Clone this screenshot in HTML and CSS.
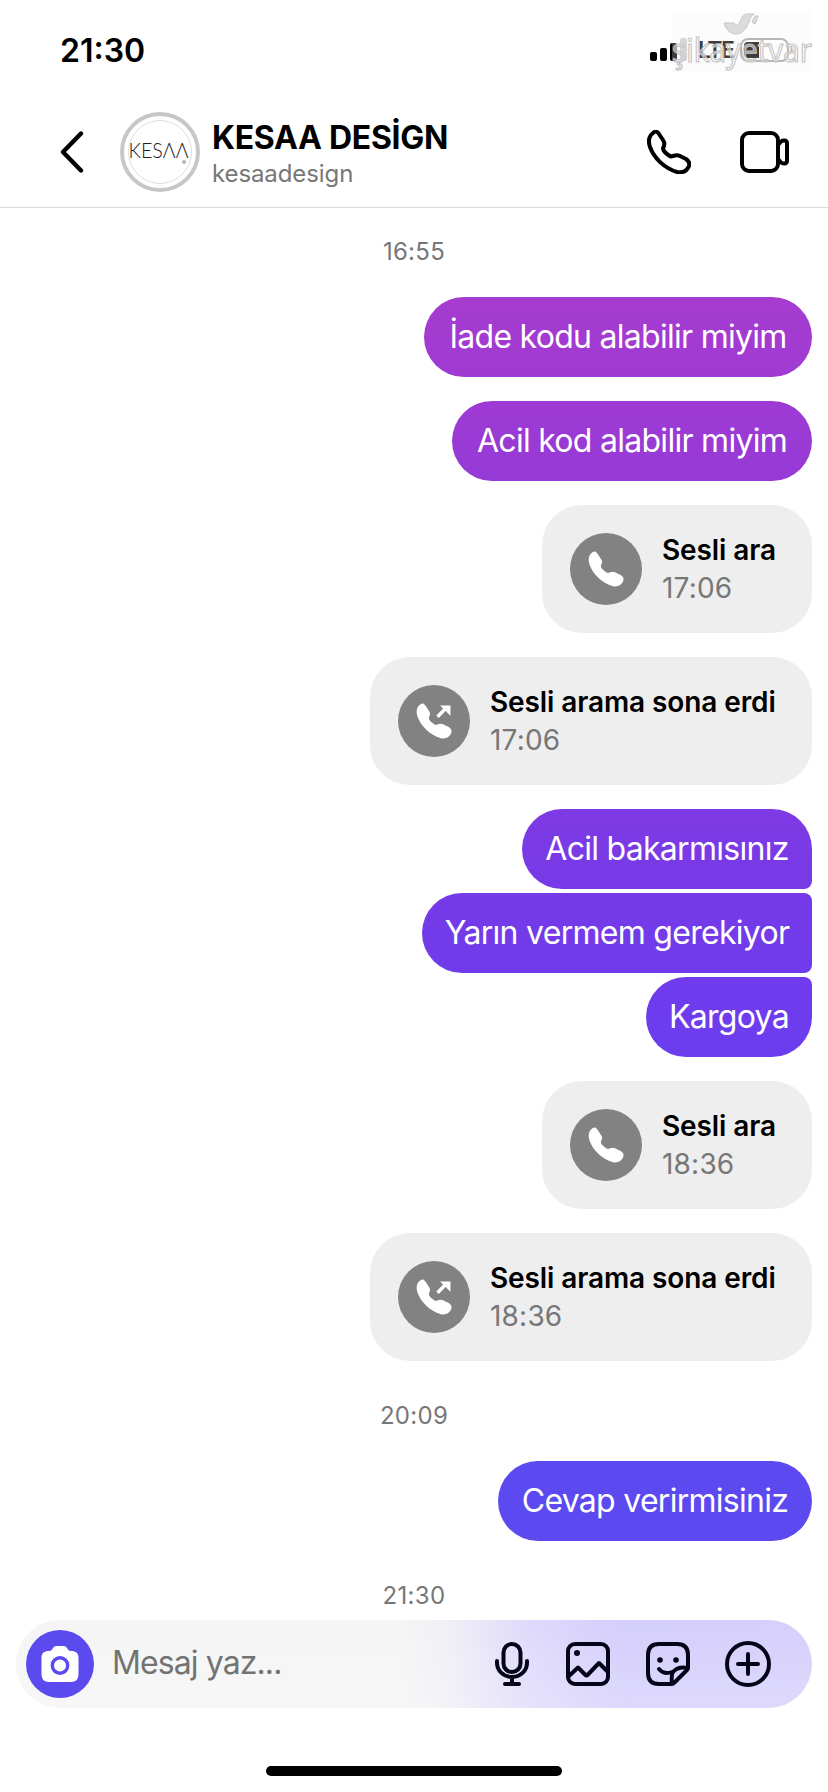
FILE: index.html
```html
<!DOCTYPE html>
<html lang="tr">
<head>
<meta charset="utf-8">
<title>KESAA DESİGN</title>
<link rel="stylesheet" href="styles.css">
</head>
<body>
<svg class="defs" width="0" height="0">
  <symbol id="handset" viewBox="0 0 44 44">
    <path d="M6 3 C2 6 1 11 3 17 C7 28 17 38 30 42 C36 43 40 41 42 36 C43 33 42 31 39 29 L33 26 C31 25 29 25 26 26 C24 27 22 26 20 24 C17 22 16 20 16 18 C18 15 18 13 16 10 L12 4 C10 1 8 1 6 3Z"/>
  </symbol>
</svg>
<div class="phone">
  <div class="status">
    <span class="clock">21:30</span>
    <div class="indicators">
      <svg class="signal" width="38" height="24" viewBox="0 0 38 24"><rect x="0" y="14" width="7" height="9" rx="2"/><rect x="10" y="10" width="7" height="13" rx="2"/><rect x="20" y="5" width="7" height="18" rx="2"/><rect x="30" y="0" width="7" height="23" rx="2" fill="#ccc"/></svg>
      <span class="network">LTE</span>
      <svg width="54" height="24" viewBox="0 0 54 24"><rect x="1" y="1" width="47" height="22" rx="7" fill="none" stroke="#a3a3a3" stroke-width="2"/><path d="M8 4h11v16H8a4 4 0 0 1-4-4V8a4 4 0 0 1 4-4Z"/><path d="M50.500 8c3 2 3 6 0 8Z" fill="#aaa"/></svg>
    </div>
    <svg class="watermark" width="160" height="64" viewBox="0 0 160 64">
      <rect x="4" y="0" width="140" height="60" fill="#f4f4f4" opacity=".25"/>
      <path d="M56 11 H66 C68 14 70 14 72 10 C74 4 76 2 80 2 H86 C82 4 82 8 80 12 C77 19 73 22 67 22 C61 21 58 17 56 11Z M84 10 L87 4 H90 L87 12Z" fill="#dcdcdc" stroke="#c6c6c6" stroke-width="1"/>
      <text x="4" y="50" textLength="140" lengthAdjust="spacingAndGlyphs">şikayetvar</text>
    </svg>
  </div>

  <header class="header">
    <svg class="back" width="24" height="42" viewBox="0 0 24 42"><path d="M21 2.500 3 21 21 39.500" fill="none" stroke="#000" stroke-width="4.400" stroke-linecap="round" stroke-linejoin="round"/></svg>
    <svg class="avatar" width="80" height="80" viewBox="0 0 80 80">
      <circle cx="40" cy="40" r="38" fill="#fff" stroke="#c7c7c7" stroke-width="4"/>
      <circle cx="40" cy="40" r="31.500" fill="none" stroke="#dedede" stroke-width="1"/>
      <text x="8.500" y="46" textLength="60" lengthAdjust="spacingAndGlyphs">KESΛΛ</text>
      <circle cx="64" cy="50" r="2" fill="#b5b5b5"/>
    </svg>
    <div class="who">
      <h1>KESAA DESİGN</h1>
      <p>kesaadesign</p>
    </div>
    <div class="calls">
      <svg width="46" height="46" viewBox="-1 -1 46 46" class="line"><use href="#handset" width="44" height="44"/></svg>
      <svg width="50" height="42" viewBox="0 0 50 42" class="line"><rect x="2" y="2" width="36" height="38" rx="7"/><path d="M38 14 L41 10.500 C43 9 47 9 47 12 V30 C47 33 43 33 41 31.500 L38 28"/></svg>
    </div>
  </header>

  <main class="thread">
    <time class="stamp first">16:55</time>
    <div class="bubble w388">İade kodu alabilir miyim</div>
    <div class="bubble b2 w360">Acil kod alabilir miyim</div>
    <div class="card short">
      <span class="disc"><svg width="38" height="38" viewBox="0 0 44 44"><use href="#handset" width="44" height="44"/></svg></span>
      <div><b>Sesli ara</b><span class="at">17:06</span></div>
    </div>
    <div class="card long">
      <span class="disc"><svg width="38" height="38" viewBox="0 0 44 44"><use href="#handset" width="44" height="44"/><path class="arrow" d="M26 17 36 7"/><path d="M29 4h12v12Z"/></svg></span>
      <div><b>Sesli arama sona erdi</b><span class="at">17:06</span></div>
    </div>
    <div class="group">
      <div class="bubble b3 w290 top">Acil bakarmısınız</div>
      <div class="bubble b4 w390 mid">Yarın vermem gerekiyor</div>
      <div class="bubble b5 w166 end">Kargoya</div>
    </div>
    <div class="card short">
      <span class="disc"><svg width="38" height="38" viewBox="0 0 44 44"><use href="#handset" width="44" height="44"/></svg></span>
      <div><b>Sesli ara</b><span class="at">18:36</span></div>
    </div>
    <div class="card long">
      <span class="disc"><svg width="38" height="38" viewBox="0 0 44 44"><use href="#handset" width="44" height="44"/><path class="arrow" d="M26 17 36 7"/><path d="M29 4h12v12Z"/></svg></span>
      <div><b>Sesli arama sona erdi</b><span class="at">18:36</span></div>
    </div>
    <time class="stamp">20:09</time>
    <div class="bubble b6 w314">Cevap verirmisiniz</div>
    <time class="stamp last">21:30</time>
  </main>

  <footer class="composer">
    <span class="camera"><svg width="38" height="36" viewBox="0 0 38 36"><path d="M8 5 C10 5 11 4 12 2 C13 .5 14 0 16 0 H22 C24 0 25 .5 26 2 C27 4 28 5 30 5 C35 5 37.500 7 37.500 12 V28 C37.500 33 35 36 30 36 H8 C3 36 .5 33 .5 28 V12 C.5 7 3 5 8 5Z" fill="#fff"/><circle cx="19" cy="19.500" r="7.700" fill="#fff" stroke="#5b4bef" stroke-width="3.400"/></svg></span>
    <span class="placeholder">Mesaj yaz...</span>
    <div class="tools">
      <svg class="mic" width="46" height="48" viewBox="0 0 46 48"><rect x="13.500" y="4" width="17" height="28" rx="8.500"/><path d="M7 21v2a15 14 0 0 0 30 0v-2M22 37v6M15 44h14"/></svg>
      <svg width="48" height="48" viewBox="0 0 48 48"><rect x="4" y="4" width="40" height="40" rx="7"/><path d="M5 36 L14 27.500 L21.500 35 Q22.500 36 23.500 35 L35 23 L43 31"/><circle cx="13" cy="13" r="3" class="dot"/></svg>
      <svg width="48" height="48" viewBox="0 0 48 48"><path d="M28 44 H15 Q4 44 4 33 V15 Q4 4 15 4 H33 Q44 4 44 15 V28 Q34 26 29 32 Q27 35 28 44 Q29 44 31 42 L43 30 Q44 29 44 28M15 29 Q20 35 28 32"/><circle cx="16" cy="20" r="2.800" class="dot"/><circle cx="32" cy="20" r="2.800" class="dot"/></svg>
      <svg width="48" height="48" viewBox="0 0 48 48"><circle cx="24" cy="24" r="21"/><path d="M24 14v20M14 24h20"/></svg>
    </div>
  </footer>
  <div class="home"></div>
</div>
</body>
</html>
```
FILE: styles.css
```css
* { box-sizing: border-box; }
body { margin: 0; background: #fff; color: #000; font-family: Inter, "Liberation Sans", sans-serif; }
.defs { position: absolute; }
.phone { width: 828px; height: 1792px; display: flex; flex-direction: column; overflow: hidden; }
.status { position: relative; height: 96px; padding: 30px 34px 26px 60px; display: flex; justify-content: space-between; align-items: center; }
.clock { font-size: 32px; font-weight: 600; }
.indicators { display: flex; align-items: center; gap: 8px; }
.signal { margin-right: 2px; }
.network { font-size: 23px; font-weight: 600; line-height: 24px; width: 34px; letter-spacing: -1.5px; }
.watermark { position: absolute; left: 668px; top: 12px; }
.watermark text { font: 33px "Open Sans", sans-serif; fill: #fff; fill-opacity: .45; stroke: #c4c4c4; stroke-width: 1.2; }

.header { height: 112px; border-bottom: 1px solid #d9d9d9; display: flex; align-items: center; padding: 0 38px 0 60px; }
.avatar { margin-left: 36px; }
.avatar text { font: 300 22px Lato, sans-serif; fill: #222; }
.who { margin: 5px 0 0 12px; width: 300px; }
.who h1 { margin: 0; font-size: 32px; font-weight: 700; line-height: 38px; white-space: nowrap; letter-spacing: -.3px; }
.who p { margin: 2px 0 0; font-size: 24px; line-height: 30px; color: #777; letter-spacing: -.1px; }
.calls { margin-left: auto; display: flex; align-items: center; gap: 48px; }
.line { fill: none; stroke: #000; stroke-width: 4; stroke-linejoin: round; }

.thread { height: 1412px; padding-right: 16px; display: flex; flex-direction: column; align-items: flex-end; gap: 24px; }
.stamp { width: 828px; margin: 15px -16px 5px 0; height: 32px; line-height: 32px; font-size: 24px; color: #777; text-align: center; letter-spacing: .3px; }
.stamp.first { margin: 28px -16px 5px 0; }
.bubble { height: 80px; line-height: 79px; border-radius: 40px; color: #fff; font-size: 32px; letter-spacing: -.72px; text-align: center; white-space: nowrap; background: linear-gradient(#a63cd0, #a03ad2); }
.b2 { background: linear-gradient(#9e3ad3, #963ad7); }
.b3 { background: linear-gradient(#7e3ae4, #763ae7); }
.b4 { background: linear-gradient(#763ae8, #703beb); }
.b5 { background: linear-gradient(#703bec, #6b3def); }
.b6 { background: #5c49f0; }
.w388 { width: 388px; }
.w360 { width: 360px; }
.w290 { width: 290px; }
.w390 { width: 390px; }
.w166 { width: 166px; }
.w314 { width: 314px; }
.group { display: flex; flex-direction: column; align-items: flex-end; gap: 4px; }
.top { border-bottom-right-radius: 8px; }
.mid { border-top-right-radius: 8px; border-bottom-right-radius: 8px; }
.end { border-top-right-radius: 8px; }

.card { height: 128px; border-radius: 40px; background: #eee; padding-left: 28px; display: flex; align-items: center; gap: 20px; white-space: nowrap; }
.short { width: 270px; }
.long { width: 442px; }
.disc { flex: none; width: 72px; height: 72px; border-radius: 50%; background: #828282; fill: #fff; display: flex; align-items: center; justify-content: center; }
.arrow { stroke: #fff; stroke-width: 4; }
.card b { display: block; font-size: 28px; font-weight: 600; line-height: 38px; letter-spacing: -.1px; }
.at { display: block; font-size: 28px; line-height: 38px; color: #777; letter-spacing: .2px; }

.composer { height: 88px; margin: 0 16px; border-radius: 44px; padding: 0 40px 0 10px; display: flex; align-items: center; background: linear-gradient(#fff0, #ffffff38), linear-gradient(90deg, #f5f5f6 48%, #f0f0f5 54%, #dfdafb 64%, #d4cefb 76%, #d5cffb); }
.camera { width: 68px; height: 68px; border-radius: 50%; background: #5b4bef; display: flex; align-items: center; justify-content: center; }
.placeholder { margin-left: 18px; font-size: 32px; color: #737373; letter-spacing: -.9px; line-height: 38px; padding-bottom: 2px; }
.tools { margin-left: auto; display: flex; gap: 32px; fill: none; stroke: #05051a; stroke-width: 4; stroke-linecap: round; stroke-linejoin: round; }
.mic { margin-right: -4px; }
.dot { fill: #05051a; stroke: none; }
.home { width: 296px; height: 10px; border-radius: 5px; background: #000; margin: 58px auto 0; }
```
